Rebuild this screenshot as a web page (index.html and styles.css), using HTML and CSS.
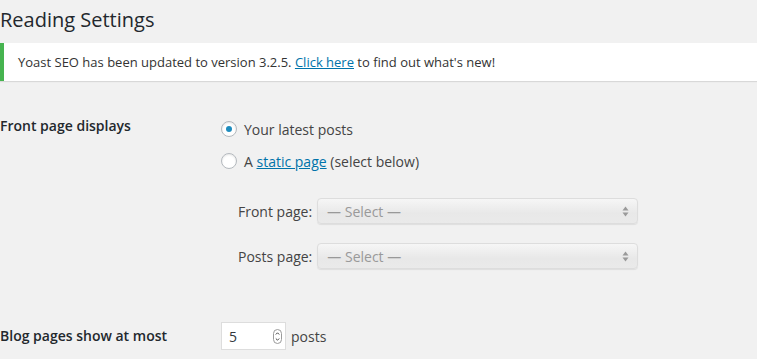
FILE: index.html
```html
<!DOCTYPE html>
<html>
<head>
<meta charset="utf-8">
<link rel="stylesheet" href="styles.css">
</head>
<body>
<div class="wrap">
  <h1 class="title">Reading Settings</h1>
  <div class="notice">Yoast SEO has been updated to version 3.2.5. <a href="#">Click here</a> to find out what's new!</div>
  <div class="row row-front">
    <div class="label">Front page displays</div>
    <div class="field">
      <div class="radio-line">
        <span class="radio checked"><span class="dot"></span></span>
        <span>Your latest posts</span>
      </div>
      <div class="radio-line">
        <span class="radio"></span>
        <span>A <a href="#">static page</a> (select below)</span>
      </div>
      <div class="selects">
        <div class="sel-line">
          <span class="sel-label">Front page:</span>
          <div class="select"><span>— Select —</span>
            <svg class="arrows" width="7" height="11" viewBox="0 0 7 11"><path d="M3.5 0.5 L6.5 4.5 H0.5 Z" fill="#9a9a9a"/><path d="M3.5 10.5 L6.5 6.5 H0.5 Z" fill="#9a9a9a"/></svg>
          </div>
        </div>
        <div class="sel-line">
          <span class="sel-label">Posts page:</span>
          <div class="select"><span>— Select —</span>
            <svg class="arrows" width="7" height="11" viewBox="0 0 7 11"><path d="M3.5 0.5 L6.5 4.5 H0.5 Z" fill="#9a9a9a"/><path d="M3.5 10.5 L6.5 6.5 H0.5 Z" fill="#9a9a9a"/></svg>
          </div>
        </div>
      </div>
    </div>
  </div>
  <div class="row row-blog">
    <div class="label">Blog pages show at most</div>
    <div class="field inline">
      <div class="number"><span>5</span>
        <span class="spin"><svg width="9" height="15" viewBox="0 0 9 15"><rect x="0.5" y="0.5" width="8" height="14" rx="4" fill="#fff" stroke="#9a9a9a"/><path d="M2.8 5.5 L4.5 3.8 L6.2 5.5" fill="none" stroke="#444" stroke-width="1"/><path d="M2.8 9.5 L4.5 11.2 L6.2 9.5" fill="none" stroke="#444" stroke-width="1"/></svg></span>
      </div>
      <span class="posts">posts</span>
    </div>
  </div>
</div>
</body>
</html>
```

FILE: styles.css
```css
html, body {
  margin: 0;
  padding: 0;
  background: #f1f1f1;
}
body {
  font-family: "Open Sans", "Noto Sans", sans-serif;
  color: #23282d;
  font-size: 13px;
  overflow: hidden;
}
.wrap {
  padding: 0;
}
.title {
  margin: 0;
  padding: 5px 0 0 0;
  font-size: 20px;
  font-weight: 400;
  line-height: 29px;
  color: #23282d;
}
.notice {
  margin-top: 9px;
  background: #fff;
  border-left: 4px solid #46b450;
  box-shadow: 0 1px 1px rgba(0,0,0,0.1);
  padding: 0 14px;
  height: 38px;
  line-height: 38px;
  font-size: 13px;
  color: #333;
}
a {
  color: #0073aa;
  text-decoration: underline;
}
.row {
  display: flex;
}
.row-front {
  margin-top: 35px;
}
.label {
  width: 220px;
  flex: none;
  font-size: 14px;
  font-weight: 600;
  color: #23282d;
  line-height: 20px;
}
.field {
  font-size: 14px;
  color: #444;
  padding-top: 3px;
}
.radio-line {
  display: flex;
  align-items: center;
  gap: 7px;
  height: 20px;
  margin-bottom: 12px;
}
.radio {
  width: 14px;
  height: 14px;
  border: 1px solid #b4b9be;
  border-radius: 50%;
  background: #fff;
  box-shadow: inset 0 1px 2px rgba(0,0,0,0.1);
  display: flex;
  align-items: center;
  justify-content: center;
  margin-left: 1px;
}
.dot {
  width: 6px;
  height: 6px;
  border-radius: 50%;
  background: #1e8cbe;
}
.selects {
  margin-top: 27px;
  padding-left: 18px;
}
.sel-line {
  display: flex;
  align-items: center;
  gap: 5px;
  margin-bottom: 19px;
  white-space: nowrap;
}
.sel-label {
  color: #444;
}
.select {
  box-sizing: border-box;
  width: 321px;
  height: 26px;
  border: 1px solid #ddd;
  border-radius: 4px;
  background: linear-gradient(#f6f6f6, #e8e8e8 60%, #eaeaea);
  box-shadow: 0 1px 1px rgba(0,0,0,0.08);
  display: flex;
  align-items: center;
  justify-content: space-between;
  padding: 0 8px 0 9px;
  color: #999;
  font-size: 14px;
}
.row-blog {
  margin-top: 34px;
  align-items: center;
}
.inline {
  display: flex;
  align-items: center;
  gap: 5px;
  padding-top: 0;
}
.number {
  box-sizing: border-box;
  width: 65px;
  height: 28px;
  border: 1px solid #ddd;
  background: #fff;
  display: flex;
  align-items: center;
  justify-content: space-between;
  padding: 0 3px 0 7px;
  color: #32373c;
  font-size: 14px;
  margin-left: 1px;
}
.spin {
  display: flex;
}
.posts {
  color: #444;
}
```
